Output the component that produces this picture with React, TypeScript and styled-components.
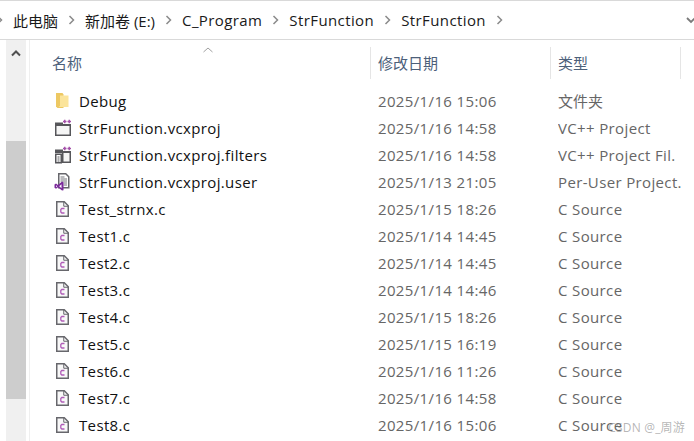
import React from "react";
import styled, { createGlobalStyle } from "styled-components";

const GlobalStyle = createGlobalStyle`
  html, body { margin: 0; padding: 0; background: #fff; }
  body {
    width: 694px;
    height: 441px;
    overflow: hidden;
    font-family: "Open Sans", "Noto Sans CJK SC", sans-serif;
  }
`;

type FileKind = "folder" | "vcxproj" | "filters" | "user" | "c";

interface FileRow {
  name: string;
  date: string;
  type: string;
  kind: FileKind;
}

const crumbs = ["此电脑", "新加卷 (E:)", "C_Program", "StrFunction", "StrFunction"];

const files: FileRow[] = [
  { name: "Debug", date: "2025/1/16 15:06", type: "文件夹", kind: "folder" },
  { name: "StrFunction.vcxproj", date: "2025/1/16 14:58", type: "VC++ Project", kind: "vcxproj" },
  { name: "StrFunction.vcxproj.filters", date: "2025/1/16 14:58", type: "VC++ Project Fil.", kind: "filters" },
  { name: "StrFunction.vcxproj.user", date: "2025/1/13 21:05", type: "Per-User Project.", kind: "user" },
  { name: "Test_strnx.c", date: "2025/1/15 18:26", type: "C Source", kind: "c" },
  { name: "Test1.c", date: "2025/1/14 14:45", type: "C Source", kind: "c" },
  { name: "Test2.c", date: "2025/1/14 14:45", type: "C Source", kind: "c" },
  { name: "Test3.c", date: "2025/1/14 14:46", type: "C Source", kind: "c" },
  { name: "Test4.c", date: "2025/1/15 18:26", type: "C Source", kind: "c" },
  { name: "Test5.c", date: "2025/1/15 16:19", type: "C Source", kind: "c" },
  { name: "Test6.c", date: "2025/1/16 11:26", type: "C Source", kind: "c" },
  { name: "Test7.c", date: "2025/1/16 14:58", type: "C Source", kind: "c" },
  { name: "Test8.c", date: "2025/1/16 15:06", type: "C Source", kind: "c" },
];

const isLatin = (text: string) => /^[\x00-\x7f]+$/.test(text);

const Sparkles = () => (
  <path
    d="M9 2.500h3.500M10.750.800v3.400M13.500 2.500H17M15.250.800v3.400"
    stroke="#a24fa8"
    strokeWidth="1.400"
  />
);

const FileIcon = ({ kind }: { kind: FileKind }) => {
  if (kind === "folder") {
    return (
      <svg width="18" height="18" viewBox="0 0 18 18">
        <path d="M2 1h6.500l1 1.500V16H3.500L2 14.500z" fill="#edc862" />
        <path d="M6 3.500h8.500V15H4.500L6 14z" fill="#fbe49b" />
      </svg>
    );
  }
  if (kind === "c") {
    return (
      <svg width="18" height="18" viewBox="0 0 18 18" fill="none">
        <path d="M2.750 1.750h7.500l4 4v10.500H2.750z" fill="#f8f8f8" stroke="#67676c" strokeWidth="1.500" />
        <path d="M9.750 1.750v4.500h4.500" stroke="#67676c" />
        <path d="M10.500 8.500H7.800L6.800 9.500v2.500l1 1h2.700" stroke="#b05cb8" strokeWidth="1.300" />
      </svg>
    );
  }
  if (kind === "vcxproj") {
    return (
      <svg width="18" height="18" viewBox="0 0 18 18" fill="none">
        <path d="M1 3.500h8V5h8v12H1z" fill="#56565a" />
        <rect x="2.500" y="7" width="13" height="8.500" fill="#f5f5f5" />
        <Sparkles />
      </svg>
    );
  }
  if (kind === "filters") {
    return (
      <svg width="18" height="18" viewBox="0 0 18 18" fill="none">
        <path d="M1 3.500h8V5h8v12H8V7H1z" fill="#56565a" />
        <rect x="9.500" y="7" width="6" height="8.500" fill="#f5f5f5" />
        <path d="M1.750 8.250h5.500v8.500h-5.500z" fill="#fff" stroke="#56565a" strokeWidth="1.500" />
        <path d="M3.500 11h2M3.500 13h2M3.500 15h2" stroke="#56565a" />
        <Sparkles />
      </svg>
    );
  }
  return (
    <svg width="18" height="18" viewBox="0 0 18 18" fill="none">
      <path d="M4.750.750h7l3 3v11h-10z" fill="#fff" stroke="#67676c" strokeWidth="1.500" />
      <path d="M6.500 4h4M6.500 6h6.500M6.500 8h6.500M9.500 10h3.500M9.500 12h3.500" stroke="#77777c" />
      <path d="M.500 11.500L2 10.500l2 1.500 4-3.500 1.500.8v8L8 17.600l-4-3.300-2 1.500-1.500-1z" fill="#7b2a9b" />
      <path d="M7.500 11.300v4L5.200 13.300z" fill="#fff" />
      <path d="M2 12.300v2l1.200-1z" fill="#fff" />
    </svg>
  );
};

const ChevronRight = () => (
  <svg width="7" height="10" viewBox="0 0 7 10" fill="none">
    <path d="M1.500 1l4 4-4 4" stroke="#8a8a8a" strokeWidth="1.500" />
  </svg>
);

const App = () => (
  <Window>
    <GlobalStyle />
    <AddressBar>
      <EdgeChevron>
        <ChevronRight />
      </EdgeChevron>
      {crumbs.map((crumb, i) => (
        <Crumb key={i}>
          <CrumbLabel $latin={isLatin(crumb)}>{crumb}</CrumbLabel>
          <ChevronRight />
        </Crumb>
      ))}
      <Dropdown>
        <svg width="10" height="7" viewBox="0 0 10 7" fill="none">
          <path d="M1 1l4 4 4-4" stroke="#7a7a7a" strokeWidth="1.800" />
        </svg>
      </Dropdown>
    </AddressBar>
    <Body>
      <Scrollbar>
        <ScrollUp>
          <svg width="10" height="7" viewBox="0 0 10 7" fill="none">
            <path d="M1 5.500l4-4 4 4" stroke="#505050" strokeWidth="2" />
          </svg>
        </ScrollUp>
        <ScrollTrackTop />
        <ScrollThumb />
        <ScrollTrackBottom />
      </Scrollbar>
      <Content>
        <Header>
          <SortCaret>
            <svg width="10" height="6" viewBox="0 0 10 6" fill="none">
              <path d="M.5 5l4.500-4 4.500 4" stroke="#a0a0a0" />
            </svg>
          </SortCaret>
          <HeaderCell $width={318}>名称</HeaderCell>
          <HeaderCell $width={180} $divider>修改日期</HeaderCell>
          <HeaderCell $width={130} $divider>类型</HeaderCell>
          <EndDivider />
        </Header>
        <Rows>
          {files.map((file) => (
            <Row key={file.name}>
              <IconSlot>
                <FileIcon kind={file.kind} />
              </IconSlot>
              <NameCell>{file.name}</NameCell>
              <DateCell>{file.date}</DateCell>
              <TypeCell $latin={isLatin(file.type)}>{file.type}</TypeCell>
            </Row>
          ))}
        </Rows>
      </Content>
      <Watermark>CSDN @_周游</Watermark>
    </Body>
  </Window>
);

export default App;

const Window = styled.div`
  position: relative;
  width: 694px;
  height: 441px;
  overflow: hidden;
  background: #fff;
  display: flex;
  flex-direction: column;
`;

const AddressBar = styled.div`
  height: 38px;
  border-top: 1px solid #d9d9d9;
  border-bottom: 1px solid #d9d9d9;
  display: flex;
  align-items: center;
  flex-shrink: 0;
`;

const EdgeChevron = styled.div`
  width: 17px;
  display: flex;
  margin-left: -4px;
`;

const Crumb = styled.div`
  display: flex;
  align-items: center;
  gap: 10px;
  margin-right: 10px;
`;

const CrumbLabel = styled.span<{ $latin: boolean }>`
  font-size: 15px;
  color: #1a1a1a;
  letter-spacing: ${({ $latin }) => ($latin ? "0.4px" : "0")};
`;

const Dropdown = styled.div`
  margin-left: auto;
  margin-right: -2px;
  display: flex;
`;

const Body = styled.div`
  position: relative;
  flex: 1;
  display: flex;
  min-height: 0;
`;

const Scrollbar = styled.div`
  width: 20px;
  margin-left: 6px;
  flex-shrink: 0;
  background: #f0f0f0;
  display: flex;
  flex-direction: column;
`;

const ScrollUp = styled.div`
  height: 32px;
  display: flex;
  align-items: center;
  justify-content: center;
  padding-bottom: 6px;
  box-sizing: border-box;
`;

const ScrollTrackTop = styled.div`
  height: 69px;
`;

const ScrollThumb = styled.div`
  height: 258px;
  background: #cdcdcd;
`;

const ScrollTrackBottom = styled.div`
  flex: 1;
`;

const Content = styled.div`
  flex: 1;
  margin-left: 3px;
  border-left: 1px solid #efefef;
  display: flex;
  flex-direction: column;
  min-width: 0;
`;

const Header = styled.div`
  position: relative;
  display: flex;
  height: 47px;
  padding-left: 22px;
  padding-top: 7px;
  box-sizing: border-box;
  flex-shrink: 0;
`;

const SortCaret = styled.div`
  position: absolute;
  left: 173px;
  top: 7px;
  display: flex;
`;

const HeaderCell = styled.div<{ $width: number; $divider?: boolean }>`
  width: ${({ $width }) => $width}px;
  height: 32px;
  line-height: 33px;
  box-sizing: border-box;
  font-size: 15px;
  color: #4c607a;
  padding-left: ${({ $divider }) => ($divider ? "7px" : "0")};
  border-left: ${({ $divider }) => ($divider ? "1px solid #e5e5e5" : "0")};
  flex-shrink: 0;
`;

const EndDivider = styled.div`
  width: 1px;
  height: 32px;
  background: #e5e5e5;
`;

const Rows = styled.div`
  display: flex;
  flex-direction: column;
`;

const Row = styled.div`
  display: flex;
  align-items: center;
  height: 27px;
  flex-shrink: 0;
  font-size: 15px;
`;

const IconSlot = styled.div`
  width: 25px;
  padding-left: 24px;
  display: flex;
  align-items: center;
  flex-shrink: 0;
`;

const NameCell = styled.div`
  width: 299px;
  flex-shrink: 0;
  color: #111;
  white-space: nowrap;
  letter-spacing: 0.36px;
`;

const DateCell = styled.div`
  width: 180px;
  flex-shrink: 0;
  color: #666;
  white-space: nowrap;
  letter-spacing: 0.36px;
`;

const TypeCell = styled.div<{ $latin: boolean }>`
  width: 123px;
  flex-shrink: 0;
  color: #666;
  white-space: nowrap;
  overflow: hidden;
  letter-spacing: ${({ $latin }) => ($latin ? "0.36px" : "0")};
`;

const Watermark = styled.div`
  position: absolute;
  right: 9px;
  bottom: 5px;
  font-size: 12px;
  letter-spacing: 0.2px;
  color: rgba(120, 120, 120, 0.55);
`;
